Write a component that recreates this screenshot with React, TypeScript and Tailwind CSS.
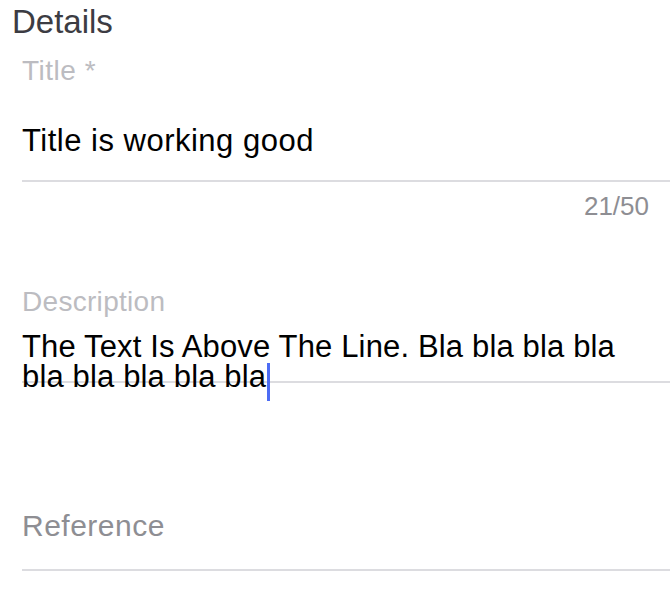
import React from "react";

export default function App() {
  return (
    <div className="w-[670px] h-[602px] bg-white overflow-hidden font-['Liberation_Sans',Arial,sans-serif]">
      <div className="pl-[12px] pt-[2px] text-[33px] leading-[40px] text-[#3c3c43]">Details</div>
      <div className="pl-[22px]">
        <div className="mt-[13px] text-[28px] leading-[32px] tracking-[0.5px] text-[#bcbcc1]">Title *</div>
        <div className="mt-[36px] text-[31px] leading-[36px] tracking-[0.5px] text-black">Title is working good</div>
        <div className="mt-[21px] h-[2px] bg-[#dcdce0]" />
        <div className="mt-[9px] pr-[21px] text-right text-[26px] leading-[30px] text-[#8e8e93]">21/50</div>
        <div className="mt-[65px] text-[28px] leading-[32px] tracking-[0.3px] text-[#bcbcc1]">Description</div>
        <div className="mt-[14px] h-[49px] w-[620px] text-[31px] leading-[30px] tracking-[0.15px] text-black">
          The Text Is Above The Line. Bla bla bla bla bla bla bla bla bla
          <span className="relative inline-block w-0">
            <span className="absolute left-[1px] top-[-24px] h-[38px] w-[3px] bg-[#4d6cf4]" />
          </span>
        </div>
        <div className="h-[2px] bg-[#dcdce0]" />
        <div className="mt-[126px] text-[30px] leading-[34px] tracking-[0.5px] text-[#8e8e93]">Reference</div>
        <div className="mt-[26px] h-[2px] bg-[#dcdce0]" />
      </div>
    </div>
  );
}
